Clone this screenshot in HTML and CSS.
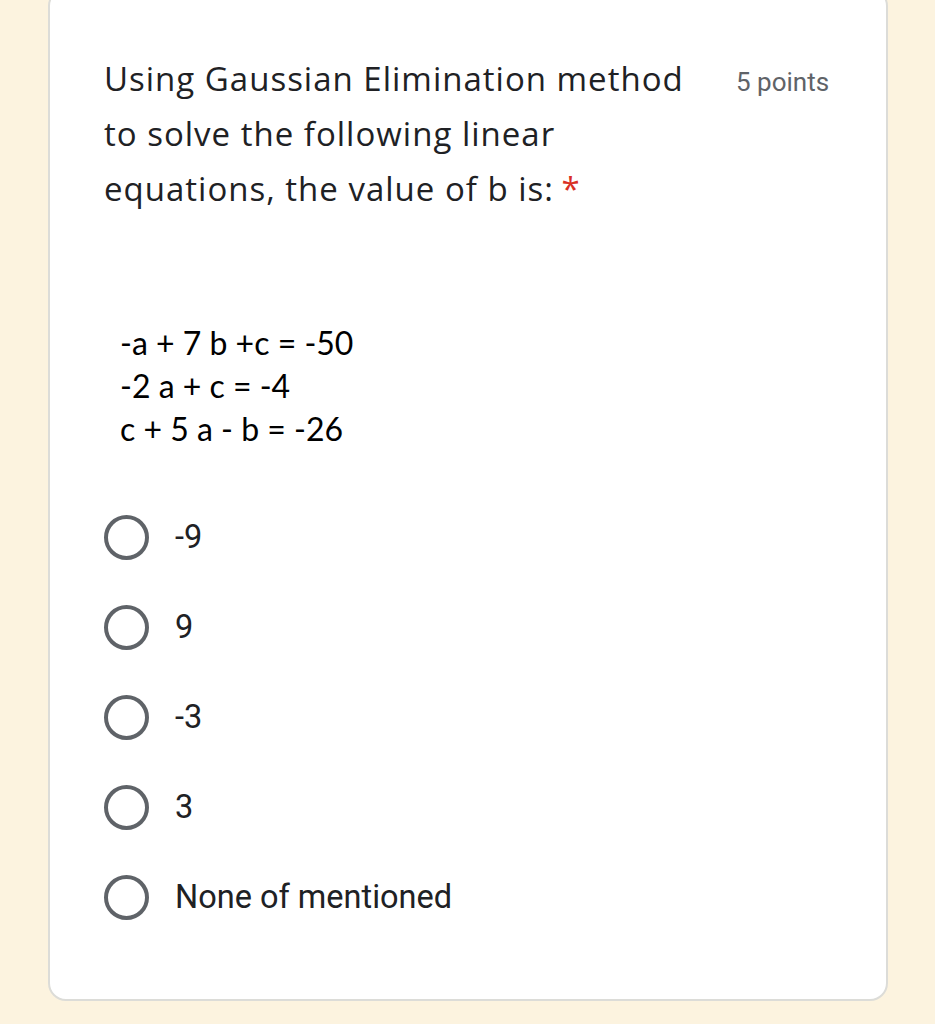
FILE: index.html
```html
<!DOCTYPE html>
<html>
<head>
<meta charset="utf-8">
<link rel="stylesheet" href="styles.css">
</head>
<body>
<div class="card">
  <div class="head">
    <div class="title">Using Gaussian Elimination method to solve the following linear equations, the value of b is: <span class="req">*</span></div>
    <div class="points">5 points</div>
  </div>
  <div class="eqs">
    <div>-a + 7 b +c = -50</div>
    <div>-2 a + c = -4</div>
    <div>c + 5 a - b = -26</div>
  </div>
  <div class="options">
    <div class="opt"><span class="radio"></span><span class="lbl">-9</span></div>
    <div class="opt"><span class="radio"></span><span class="lbl">9</span></div>
    <div class="opt"><span class="radio"></span><span class="lbl">-3</span></div>
    <div class="opt"><span class="radio"></span><span class="lbl">3</span></div>
    <div class="opt"><span class="radio"></span><span class="lbl">None of mentioned</span></div>
  </div>
</div>
</body>
</html>
```
FILE: styles.css
```css
html, body {
  margin: 0;
  padding: 0;
  background: #fcf3df;
  height: 100%;
  overflow: hidden;
}
.card {
  box-sizing: border-box;
  margin: -12px 0 0 48px;
  width: 840px;
  height: 1013px;
  background: #fff;
  border: 2px solid #dcdcd8;
  border-radius: 18px;
  padding: 61px 54px 0 54px;
  font-family: Roboto, "Open Sans", sans-serif;
}
.head {
  display: flex;
  align-items: flex-start;
}
.title {
  width: 610px;
  font-family: "Open Sans", Roboto, sans-serif;
  font-size: 33px;
  letter-spacing: 1px;
  line-height: 55px;
  color: #202124;
}
.req {
  color: #d93025;
  letter-spacing: 0;
  margin-left: -2px;
}
.points {
  margin-left: 22px;
  margin-top: 16px;
  font-size: 26px;
  color: #5f6368;
  white-space: nowrap;
}
.eqs {
  margin-top: 105px;
  padding-left: 16px;
  font-family: Lato, "Open Sans", sans-serif;
  font-size: 32px;
  line-height: 43px;
  color: #000;
}
.options {
  margin-top: 42px;
}
.opt {
  display: flex;
  align-items: center;
  height: 90px;
}
.radio {
  box-sizing: border-box;
  width: 45px;
  height: 45px;
  border: 4px solid #5f6368;
  border-radius: 50%;
  flex: none;
}
.lbl {
  margin-left: 26px;
  font-size: 32.5px;
  color: #202124;
}
```
